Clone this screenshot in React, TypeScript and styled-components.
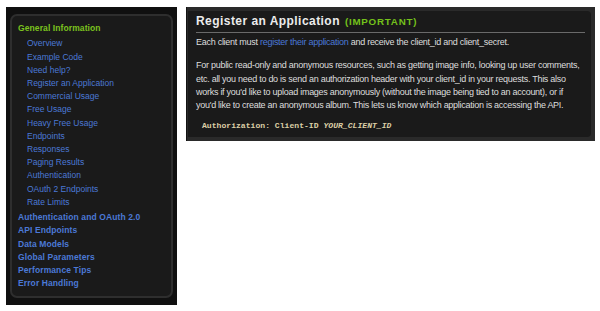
import React from "react";
import styled, { createGlobalStyle } from "styled-components";

const Global = createGlobalStyle`
  html, body { margin: 0; padding: 0; background: #ffffff; }
  body { font-family: "Liberation Sans", Arial, sans-serif; }
`;

const Page = styled.div`
  display: flex;
  align-items: flex-start;
  gap: 9px;
  padding: 7px 5px 0 6px;
`;

const Sidebar = styled.div`
  width: 171px;
  height: 298px;
  box-sizing: border-box;
  background: #101010;
  padding: 7px 4px 7px 4px;
`;

const NavBox = styled.nav`
  height: 100%;
  box-sizing: border-box;
  background: #1a1a1a;
  border: 2px solid #2e2e2e;
  border-radius: 7px;
  padding: 6px 0 0 6px;
  display: flex;
  flex-direction: column;
`;

const SectionTitle = styled.a<{ $active?: boolean }>`
  display: block;
  font-size: 8.5px;
  font-weight: bold;
  letter-spacing: 0.1px;
  line-height: 13.3px;
  color: ${(p) => (p.$active ? "#7cc31e" : "#4b79d6")};
  text-decoration: none;
`;

const SubList = styled.div`
  display: flex;
  flex-direction: column;
  padding: 2px 0 2px 9px;
`;

const SubItem = styled.a`
  display: block;
  font-size: 8.5px;
  line-height: 13.2px;
  color: #4b79d6;
  text-decoration: none;
`;

const Content = styled.div`
  width: 409px;
  height: 134px;
  box-sizing: border-box;
  background: #2a2a2a;
  padding: 4px 4px 4px 1px;
  border-left: 1px solid #121212;
`;

const ContentInner = styled.div`
  height: 100%;
  box-sizing: border-box;
  background: #1a1a1a;
  border-radius: 0 4px 4px 0;
  padding: 3px 6px 0 8px;
  color: #e2e2e2;
  overflow: hidden;
`;

const Heading = styled.h2`
  margin: 0;
  font-size: 12px;
  font-weight: bold;
  letter-spacing: 0.45px;
  line-height: 14px;
  color: #ececec;
  padding-bottom: 3px;
  border-bottom: 1px solid #6a6a6a;
  display: flex;
  align-items: baseline;
  gap: 5px;
`;

const Important = styled.span`
  font-size: 9.8px;
  font-weight: bold;
  letter-spacing: 0.75px;
  color: #74c11b;
`;

const Para = styled.p`
  margin: 0;
  font-size: 9px;
  letter-spacing: -0.27px;
  line-height: 13.3px;
  color: #dedede;
  & + & { margin-top: 10px; }
  &:first-of-type { margin-top: 3px; }
`;

const Line = styled.span`
  display: block;
  white-space: nowrap;
`;

const Link = styled.a`
  color: #4b79d6;
  text-decoration: none;
`;

const Code = styled.div`
  margin-top: 8px;
  padding-left: 6px;
  font-family: "Liberation Mono", "Courier New", monospace;
  font-weight: bold;
  font-size: 8.1px;
  line-height: 11px;
  color: #dccfa6;
  white-space: pre;
`;

const CodeVar = styled.em`
  font-style: italic;
`;

const subItems = [
  "Overview",
  "Example Code",
  "Need help?",
  "Register an Application",
  "Commercial Usage",
  "Free Usage",
  "Heavy Free Usage",
  "Endpoints",
  "Responses",
  "Paging Results",
  "Authentication",
  "OAuth 2 Endpoints",
  "Rate Limits",
];

const sections = [
  "Authentication and OAuth 2.0",
  "API Endpoints",
  "Data Models",
  "Global Parameters",
  "Performance Tips",
  "Error Handling",
];

const paraLines = [
  "For public read-only and anonymous resources, such as getting image info, looking up user comments,",
  "etc. all you need to do is send an authorization header with your client_id in your requests. This also",
  "works if you'd like to upload images anonymously (without the image being tied to an account), or if",
  "you'd like to create an anonymous album. This lets us know which application is accessing the API.",
];

export default function App() {
  return (
    <>
      <Global />
      <Page>
        <Sidebar>
          <NavBox>
            <SectionTitle $active>General Information</SectionTitle>
            <SubList>
              {subItems.map((s) => (
                <SubItem key={s}>{s}</SubItem>
              ))}
            </SubList>
            {sections.map((s) => (
              <SectionTitle key={s}>{s}</SectionTitle>
            ))}
          </NavBox>
        </Sidebar>
        <Content>
          <ContentInner>
            <Heading>
              Register an Application <Important>(IMPORTANT)</Important>
            </Heading>
            <Para>
              Each client must <Link>register their application</Link> and receive the client_id and
              client_secret.
            </Para>
            <Para>
              {paraLines.map((l) => (
                <Line key={l}>{l}</Line>
              ))}
            </Para>
            <Code>
              Authorization: Client-ID <CodeVar>YOUR_CLIENT_ID</CodeVar>
            </Code>
          </ContentInner>
        </Content>
      </Page>
    </>
  );
}
